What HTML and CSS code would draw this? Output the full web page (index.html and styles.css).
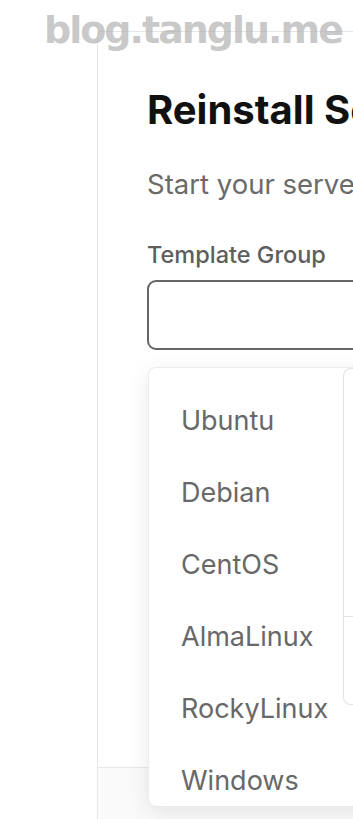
FILE: index.html
```html
<!DOCTYPE html>
<html lang="en">
<head>
    <meta charset="UTF-8">
    <meta name="viewport" content="width=device-width, initial-scale=1.0">
    <title>Reinstall Server</title>
    <link rel="stylesheet" href="styles.css">
</head>
<body>
    <div class="card">
        <div class="card-body">
            <h1 class="title">Reinstall Server</h1>
            <p class="subtitle">Start your server over with a fresh system</p>
            <label class="label">Template Group</label>
            <div class="select"></div>
        </div>
        <div class="card-footer"></div>
    </div>

    <div class="dropdown">
        <ul class="groups">
            <li>Ubuntu</li>
            <li>Debian</li>
            <li>CentOS</li>
            <li>AlmaLinux</li>
            <li>RockyLinux</li>
            <li>Windows</li>
        </ul>
        <div class="sub">
            <div class="sub-top"></div>
        </div>
    </div>

    <div class="watermark">blog.tanglu.me</div>
</body>
</html>
```

FILE: styles.css
```css
html, body {
    margin: 0;
    padding: 0;
    background: #fff;
    overflow: hidden;
    height: 819px;
}
body {
    font-family: Inter, "Noto Sans", sans-serif;
}
.card {
    margin: 31px 0 0 97px;
    width: 400px;
    border: 1px solid #e6e6e6;
    border-right: none;
    border-radius: 4px 0 0 0;
}
.card-body {
    height: 735px;
    padding: 54px 0 0 49px;
    box-sizing: border-box;
}
.title {
    margin: 0;
    font-size: 40px;
    line-height: 48px;
    font-weight: 700;
    color: #111;
    white-space: nowrap;
}
.subtitle {
    margin: 32px 0 0;
    font-size: 27.5px;
    line-height: 36px;
    color: #6a6a6a;
    white-space: nowrap;
}
.label {
    display: block;
    margin-top: 37px;
    font-size: 23.5px;
    line-height: 32px;
    font-weight: 500;
    color: #5e5e5e;
}
.select {
    margin-top: 9px;
    width: 260px;
    height: 70px;
    box-sizing: border-box;
    border: 2px solid #666;
    border-radius: 9px;
}
.card-footer {
    height: 80px;
    border-top: 1px solid #e8e8e8;
    background: #fafafa;
}

/* open cascader menu */
.dropdown {
    position: absolute;
    top: 367px;
    left: 148px;
    width: 300px;
    height: 440px;
    box-sizing: border-box;
    border: 1px solid #ececec;
    border-radius: 8px;
    background: #fff;
    box-shadow: 0 6px 22px rgba(0, 0, 0, 0.09);
    overflow: hidden;
    display: flex;
}
.groups {
    list-style: none;
    margin: 0;
    padding: 17px 0 0;
    width: 194px;
    flex: none;
}
.groups li {
    height: 72px;
    line-height: 72px;
    padding-left: 32px;
    font-size: 27px;
    color: #686868;
    white-space: nowrap;
}
.sub {
    width: 120px;
    height: 337px;
    flex: none;
    box-sizing: border-box;
    border: 1px solid #e2e2e2;
    border-right: none;
    border-radius: 8px 0 0 8px;
    background: #fff;
}
.sub-top {
    height: 247px;
    border-bottom: 1px solid #e4e4e4;
}

.watermark {
    position: absolute;
    top: 11px;
    left: 44px;
    font-family: "DejaVu Sans", sans-serif;
    font-weight: 700;
    font-size: 38px;
    line-height: 38px;
    letter-spacing: -2px;
    color: rgba(170, 170, 170, 0.65);
    white-space: nowrap;
}
```
